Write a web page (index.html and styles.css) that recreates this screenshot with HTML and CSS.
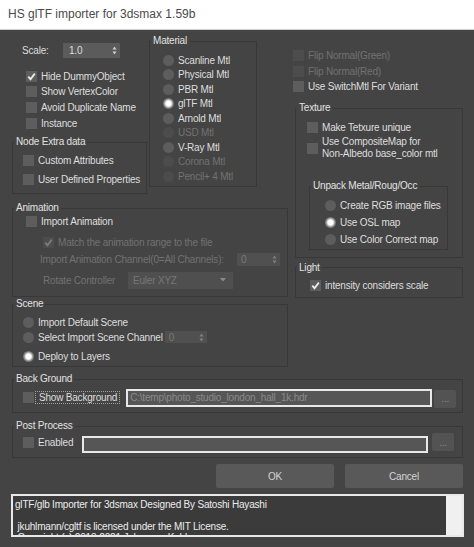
FILE: index.html
```html
<!DOCTYPE html>
<html>
<head>
<meta charset="utf-8">
<title>HS glTF importer for 3dsmax 1.59b</title>
<link rel="stylesheet" href="styles.css">
</head>
<body>
<div class="titlebar">HS glTF importer for 3dsmax 1.59b</div>
<div class="client">
  <div class="top">
    <div class="leftcol">
      <div class="lefttop">
        <div class="col1">
          <div class="scale-row">
            <span class="scale-label">Scale:</span>
            <span class="spin spin-scale"><span>1.0</span><svg class="arr" width="5" height="9" viewBox="0 0 5 9"><path d="M2.5 0.5L4.5 3.5H0.5Z M2.5 8.5L4.5 5.5H0.5Z" fill="#cfcfcf"/></svg></span>
          </div>
          <div class="checks">
            <div class="row r16"><span class="cb"><svg width="11" height="11" viewBox="0 0 11 11"><path d="M2.3 5.6L4.5 8.2L8.8 2.6" fill="none" stroke="#ececec" stroke-width="1.8"/></svg></span><span>Hide DummyObject</span></div>
            <div class="row r155"><span class="cb"></span><span>Show VertexColor</span></div>
            <div class="row r155"><span class="cb"></span><span>Avoid Duplicate Name</span></div>
            <div class="row r16"><span class="cb"></span><span>Instance</span></div>
          </div>
          <fieldset class="g-node">
            <legend>Node Extra data</legend>
            <div class="gc-node">
              <div class="row r16"><span class="cb"></span><span>Custom Attributes</span></div>
              <div class="row r16 mt3"><span class="cb"></span><span>User Defined Properties</span></div>
            </div>
          </fieldset>
        </div>
        <fieldset class="g-mat">
          <legend>Material</legend>
          <div class="gc-mat">
            <div class="row rm"><span class="rd"></span><span>Scanline Mtl</span></div>
            <div class="row rm"><span class="rd"></span><span>Physical Mtl</span></div>
            <div class="row rm"><span class="rd"></span><span>PBR Mtl</span></div>
            <div class="row rm"><span class="rd on"></span><span>glTF Mtl</span></div>
            <div class="row rm"><span class="rd"></span><span>Arnold Mtl</span></div>
            <div class="row rm dis-t"><span class="rd dis"></span><span>USD Mtl</span></div>
            <div class="row rm"><span class="rd"></span><span>V-Ray Mtl</span></div>
            <div class="row rm dis-t"><span class="rd dis"></span><span>Corona Mtl</span></div>
            <div class="row rm dis-t"><span class="rd dis"></span><span>Pencil+ 4 Mtl</span></div>
          </div>
        </fieldset>
      </div>

      <fieldset class="g-anim">
        <legend>Animation</legend>
        <div class="gc-anim">
          <div class="row a1"><span class="cb"></span><span>Import Animation</span></div>
          <div class="row a2 dis-t"><span class="cb dis"><svg width="11" height="11" viewBox="0 0 11 11"><path d="M2.3 5.6L4.5 8.2L8.8 2.6" fill="none" stroke="#7c7c7c" stroke-width="1.8"/></svg></span><span>Match the animation range to the file</span></div>
          <div class="row a3 dis-t"><span class="chan-label">Import Animation Channel(0=All Channels):</span><span class="spin spin-dis spin-chan"><span>0</span><svg class="arr" width="5" height="9" viewBox="0 0 5 9"><path d="M2.5 0.5L4.5 3.5H0.5Z M2.5 8.5L4.5 5.5H0.5Z" fill="#808080"/></svg></span></div>
          <div class="row a4 dis-t"><span class="rot-label">Rotate Controller</span><span class="dd"><span>Euler XYZ</span><svg width="6" height="4" viewBox="0 0 6 4"><path d="M0 0H6L3 3.5Z" fill="#8a8a8a"/></svg></span></div>
        </div>
      </fieldset>

      <fieldset class="g-scene">
        <legend>Scene</legend>
        <div class="gc-scene">
          <div class="row s1"><span class="rd"></span><span>Import Default Scene</span></div>
          <div class="row s2"><span class="rd"></span><span>Select Import Scene Channel</span><span class="spin spin-dis spin-scene"><span>0</span><svg class="arr" width="5" height="9" viewBox="0 0 5 9"><path d="M2.5 0.5L4.5 3.5H0.5Z M2.5 8.5L4.5 5.5H0.5Z" fill="#808080"/></svg></span></div>
          <div class="row s3"><span class="rd on"></span><span>Deploy to Layers</span></div>
        </div>
      </fieldset>
    </div>

    <div class="rightcol">
      <div class="flips">
        <div class="row r155 dis-t"><span class="cb dis"></span><span>Flip Normal(Green)</span></div>
        <div class="row r155 dis-t"><span class="cb dis"></span><span>Flip Normal(Red)</span></div>
        <div class="row r15"><span class="cb"></span><span>Use SwitchMtl For Variant</span></div>
      </div>
      <fieldset class="g-tex">
        <legend>Texture</legend>
        <div class="gc-tex">
          <div class="row r16"><span class="cb"></span><span>Make Tetxure unique</span></div>
          <div class="row comp"><span class="cb"></span><span class="two">Use CompositeMap for<br>Non-Albedo base_color mtl</span></div>
          <fieldset class="g-unpack">
            <legend>Unpack Metal/Roug/Occ</legend>
            <div class="gc-unpack">
              <div class="row r17"><span class="rd"></span><span>Create RGB image files</span></div>
              <div class="row r17"><span class="rd on"></span><span>Use OSL map</span></div>
              <div class="row r17"><span class="rd"></span><span>Use Color Correct map</span></div>
            </div>
          </fieldset>
        </div>
      </fieldset>
      <fieldset class="g-light">
        <legend>Light</legend>
        <div class="gc-light">
          <div class="row r14"><span class="cb"><svg width="11" height="11" viewBox="0 0 11 11"><path d="M2.3 5.6L4.5 8.2L8.8 2.6" fill="none" stroke="#ececec" stroke-width="1.8"/></svg></span><span>intensity considers scale</span></div>
        </div>
      </fieldset>
    </div>
  </div>

  <fieldset class="g-bg">
    <legend>Back Ground</legend>
    <div class="gc-bg">
      <div class="row r19"><span class="cb"></span><span class="focus">Show Background</span><span class="field field-bg">C:\temp\photo_studio_london_hall_1k.hdr</span><span class="dots dots-bg">...</span></div>
    </div>
  </fieldset>

  <fieldset class="g-pp">
    <legend>Post Process</legend>
    <div class="gc-pp">
      <div class="row r19"><span class="cb"></span><span class="pp-label">Enabled</span><span class="field field-pp"></span><span class="dots dots-pp">...</span></div>
    </div>
  </fieldset>

  <div class="buttons">
    <span class="btn">OK</span>
    <span class="btn">Cancel</span>
  </div>

  <div class="log">
    <div class="log-text">glTF/glb Importer for 3dsmax Designed By Satoshi Hayashi<br>&nbsp;<br>&nbsp;jkuhlmann/cgltf is licensed under the MIT License.<br>&nbsp;Copyright (c) 2018-2021 Johannes Kuhlmann</div>
    <div class="log-bar"></div>
  </div>
</div>
</body>
</html>
```

FILE: styles.css
```css
* { box-sizing: border-box; }

html, body {
  margin: 0;
  padding: 0;
}

body {
  width: 474px;
  height: 547px;
  overflow: hidden;
  background: #444444;
  color: #dedede;
  font-family: "Liberation Sans", Arial, sans-serif;
  font-size: 10px;
  letter-spacing: -0.2px;
}

.titlebar {
  height: 30px;
  background: #ffffff;
  color: #4a4a4a;
  font-size: 12px;
  letter-spacing: 0;
  padding: 0 0 1px 8px;
  display: flex;
  align-items: center;
  border-bottom: 1px solid #cfcfcf;
}

.client {
  padding: 0 11px 0 12px;
}

fieldset {
  margin: 0;
  padding: 0;
  min-width: 0;
  border: 1px solid #383838;
}

legend {
  padding: 0 2px;
  margin-left: 1px;
  height: 12px;
  line-height: 12px;
  color: #e2e2e2;
}

.row {
  display: flex;
  align-items: center;
  gap: 4px;
  white-space: nowrap;
}

.r14 { height: 14px; }
.r15 { height: 15px; }
.r155 { height: 15.5px; }
.r16 { height: 16px; }
.r17 { height: 17px; }
.r19 { height: 19px; }
.mt3 { margin-top: 3px; }

.dis-t { color: #727272; }

/* checkbox / radio */
.cb {
  width: 11px;
  height: 11px;
  flex: none;
  background: #5d5d5d;
  display: flex;
}
.cb svg { display: block; }
.cb.dis { background: #4d4d4d; }

.rd {
  width: 11px;
  height: 11px;
  flex: none;
  border-radius: 50%;
  background: #5d5d5d;
}
.rd.on {
  background: radial-gradient(circle, #ffffff 0 2.4px, #dcdcdc 3.2px, #9a9a9a 4.2px, #6c6c6c 5.5px);
}
.rd.dis { background: #4c4c4c; }

/* spinners */
.spin {
  display: flex;
  align-items: center;
  justify-content: space-between;
  background: #5b5b5b;
  color: #dcdcdc;
  padding: 0 3px 0 6px;
}
.arr { display: block; }
.spin-scale { width: 57px; height: 15px; }
.spin-dis { background: #505050; color: #7a7a7a; }
.spin-chan { width: 43px; height: 13px; padding-left: 4px; }
.spin-scene { width: 42px; height: 12px; padding-left: 4px; margin-left: -2px; }

.dd {
  display: flex;
  align-items: center;
  justify-content: space-between;
  width: 105px;
  height: 17px;
  background: #4f4f4f;
  color: #777777;
  padding: 0 7px 0 5px;
}

/* layout */
.top {
  display: grid;
  grid-template-columns: 276px 170px;
  column-gap: 5px;
  height: 340px;
}

.leftcol {
  display: flex;
  flex-direction: column;
}

.lefttop {
  display: flex;
  height: 172px;
}

.col1 {
  width: 135px;
  display: flex;
  flex-direction: column;
}

.scale-row {
  display: flex;
  align-items: center;
  margin-top: 13px;
  height: 15px;
  padding-left: 10px;
}
.scale-label { width: 41px; }

.checks {
  margin-top: 10px;
  padding-left: 14px;
}

.g-node { margin-top: 5px; width: 135px; }
.gc-node { padding: 4px 0 6px 10px; }

.g-mat {
  margin-top: 5px;
  margin-left: 2px;
  width: 108px;
  align-self: flex-start;
}
.gc-mat { padding: 6px 0 2px 13px; }
.rm { height: 14.5px; }

.g-anim { width: 276px; }
.gc-anim { padding: 0 0 7px 13px; }
.a1 { height: 15px; }
.a2 { height: 16px; margin-top: 5px; padding-left: 17px; }
.a3 { height: 14px; margin-top: 2px; padding-left: 14px; gap: 0; }
.chan-label { width: 197px; }
.a4 { height: 18px; margin-top: 5px; padding-left: 17px; gap: 0; }
.rot-label { width: 85px; }

.g-scene { margin-top: 1px; width: 276px; }
.gc-scene { padding: 5px 0 2px 10px; }
.s1 { height: 14px; }
.s2 { height: 14px; margin-top: 1px; }
.s3 { height: 16px; margin-top: 4px; }

.rightcol {
  display: flex;
  flex-direction: column;
}

.flips { margin-top: 18px; }

.g-tex { margin-top: 8px; margin-left: 2px; width: 168px; }
.gc-tex { padding: 5px 0 7px 11px; }
.comp { height: 24px; margin-top: 1px; }
.two { line-height: 12px; }

.g-unpack { margin-top: 20px; margin-left: 2px; width: 139px; }
.gc-unpack { padding: 4.5px 0 1px 15px; }

.g-light { margin-top: 4px; margin-left: 2px; width: 168px; }
.gc-light { padding: 5px 0 4px 14px; }

.g-bg { margin-top: 3px; width: 451px; }
.gc-bg { padding: 3px 0 5px 10px; }

.focus {
  border: 1px dotted #a0a0a0;
  height: 13px;
  line-height: 11px;
  padding: 0 2px 0 3px;
  margin-left: -3px;
}

.field {
  border: 2px solid #e8e8e8;
  background: #565656;
  color: #8a8a8a;
  display: flex;
  align-items: center;
  padding-left: 2px;
  overflow: hidden;
}
.field-bg { width: 306px; height: 18px; margin-left: 2px; }
.field-pp { width: 346px; height: 17px; margin-top: 3px; }
.pp-label { width: 40px; }

.dots {
  width: 22px;
  height: 18px;
  background: #535353;
  color: #8a8a8a;
  border-radius: 2px;
  display: flex;
  align-items: center;
  justify-content: center;
  margin-left: -2px;
}
.dots-bg { margin-top: 2px; }
.dots-pp { margin-left: 0; margin-top: -1px; }

.g-pp { margin-top: 7px; width: 451px; }
.gc-pp { padding: 1px 0 5px 10px; }

.buttons {
  display: flex;
  justify-content: flex-end;
  gap: 11px;
  margin-top: 6px;
}
.btn {
  width: 118px;
  height: 24px;
  background: #595959;
  color: #d4d4d4;
  border-radius: 2px;
  display: flex;
  align-items: center;
  justify-content: center;
}

.log {
  display: flex;
  margin-top: 6px;
  margin-left: -1px;
  width: 453px;
  height: 43px;
  border: 2px solid #e8e8e8;
  overflow: hidden;
}
.log-text {
  flex: 1;
  background: #3b3b3b;
  color: #ececec;
  line-height: 11px;
  padding: 3px 0 0 2px;
  white-space: nowrap;
  overflow: hidden;
}
.log-bar {
  width: 16px;
  background: #f0f0f0;
}
```
